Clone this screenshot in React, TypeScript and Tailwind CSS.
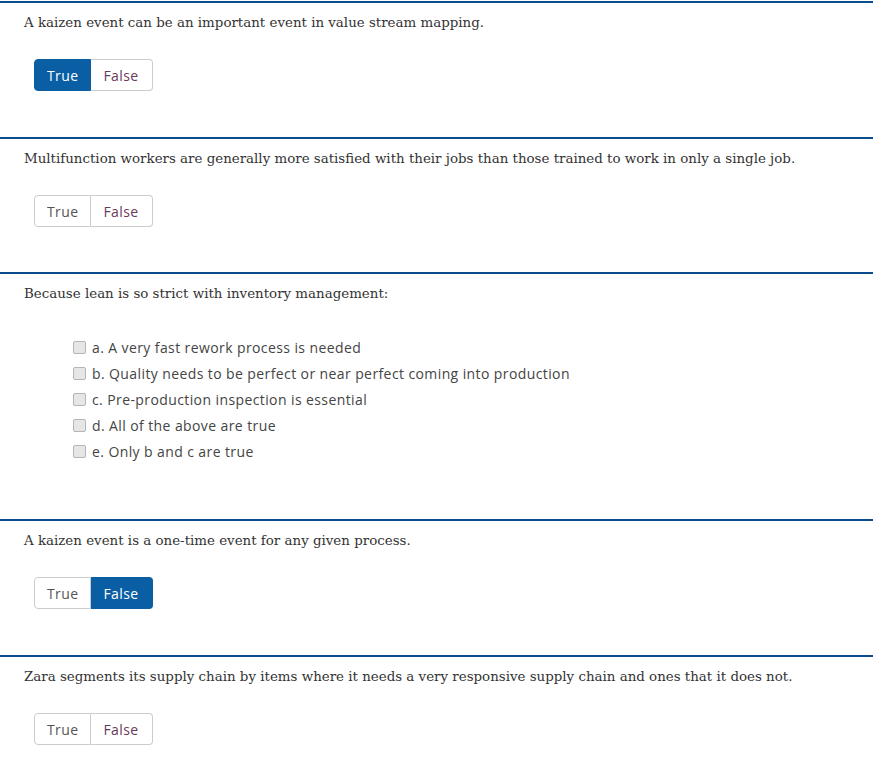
import React from "react";

const serif = { fontFamily: '"DejaVu Serif", serif' };
const sans = { fontFamily: '"Open Sans", sans-serif' };

function TF({ value }: { value: "true" | "false" | null }) {
  const base = "h-[32px] flex items-center text-[14px] tracking-[0.4px] border";
  return (
    <div className="flex ml-[10px]" style={sans}>
      <div
        className={`${base} px-[12px] rounded-l-[4px] ${
          value === "true"
            ? "bg-[#0a5fa4] border-[#0a5fa4] text-white"
            : "bg-white border-[#cccccc] text-[#555555]"
        }`}
      >
        True
      </div>
      <div
        className={`${base} pl-[12px] pr-[13px] rounded-r-[4px] border-l-0 ${
          value === "false"
            ? "bg-[#0a5fa4] border-[#0a5fa4] text-white"
            : "bg-white border-[#cccccc] text-[#6b3a5a]"
        }`}
      >
        False
      </div>
    </div>
  );
}

function Section({
  q,
  children,
  pb,
}: {
  q: string;
  children: React.ReactNode;
  pb: string;
}) {
  return (
    <div className={`border-t-2 border-[#0b4c8c] pt-[10px] pl-[24px] ${pb}`}>
      <div className="text-[13.4px] leading-[20px] text-[#333333]" style={serif}>
        {q}
      </div>
      {children}
    </div>
  );
}

export default function App() {
  const opts = [
    "a. A very fast rework process is needed",
    "b. Quality needs to be perfect or near perfect coming into production",
    "c. Pre-production inspection is essential",
    "d. All of the above are true",
    "e. Only b and c are true",
  ];
  return (
    <div className="bg-white w-[873px] h-[783px] pt-[1px]">
      <Section q="A kaizen event can be an important event in value stream mapping." pb="pb-[46px]">
        <div className="mt-[26px]">
          <TF value="true" />
        </div>
      </Section>
      <Section
        q="Multifunction workers are generally more satisfied with their jobs than those trained to work in only a single job."
        pb="pb-[45px]"
      >
        <div className="mt-[26px]">
          <TF value={null} />
        </div>
      </Section>
      <Section q="Because lean is so strict with inventory management:" pb="pb-[55px]">
        <div className="mt-[30px] pl-[49px] flex flex-col" style={sans}>
          {opts.map((o) => (
            <div key={o} className="h-[26px] flex items-center gap-[6px] text-[14px] tracking-[0.4px] text-[#444444]">
              <span className="w-[13px] h-[13px] rounded-[2px] border border-[#b5b5b5] bg-[#e6e6e6]" />
              <span>{o}</span>
            </div>
          ))}
        </div>
      </Section>
      <Section q="A kaizen event is a one-time event for any given process." pb="pb-[46px]">
        <div className="mt-[26px]">
          <TF value="false" />
        </div>
      </Section>
      <Section
        q="Zara segments its supply chain by items where it needs a very responsive supply chain and ones that it does not."
        pb="pb-[46px]"
      >
        <div className="mt-[26px]">
          <TF value={null} />
        </div>
      </Section>
    </div>
  );
}
